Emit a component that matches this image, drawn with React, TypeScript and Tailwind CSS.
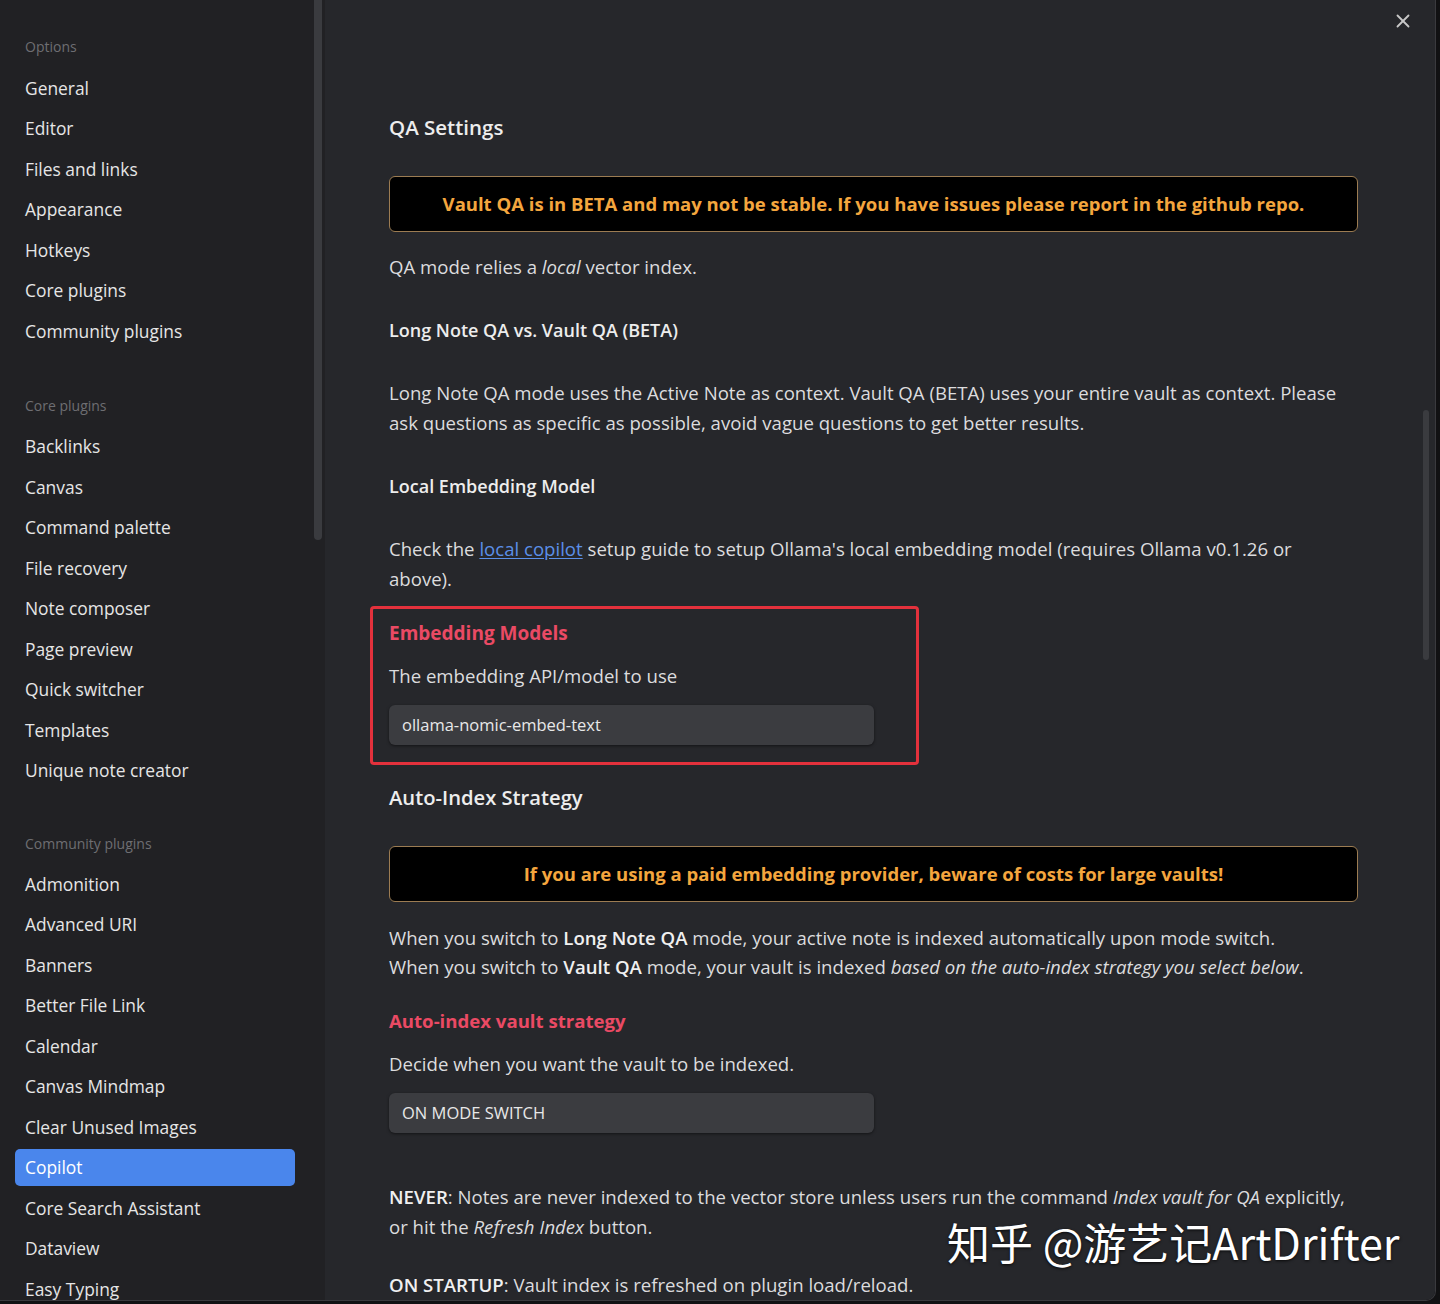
import { X } from "lucide-react";

const FONT = { fontFamily: '"Open Sans", "Noto Sans", sans-serif' };

const SECTIONS: { title: string; items: string[] }[] = [
  {
    title: "Options",
    items: [
      "General",
      "Editor",
      "Files and links",
      "Appearance",
      "Hotkeys",
      "Core plugins",
      "Community plugins",
    ],
  },
  {
    title: "Core plugins",
    items: [
      "Backlinks",
      "Canvas",
      "Command palette",
      "File recovery",
      "Note composer",
      "Page preview",
      "Quick switcher",
      "Templates",
      "Unique note creator",
    ],
  },
  {
    title: "Community plugins",
    items: [
      "Admonition",
      "Advanced URI",
      "Banners",
      "Better File Link",
      "Calendar",
      "Canvas Mindmap",
      "Clear Unused Images",
      "Copilot",
      "Core Search Assistant",
      "Dataview",
      "Easy Typing",
    ],
  },
];

function Sidebar() {
  return (
    <aside className="relative h-full w-[325px] shrink-0 overflow-hidden bg-[#212124]">
      <div className="px-[15px] pt-[37px]">
        {SECTIONS.map((s, i) => (
          <div key={s.title} className={i === 1 ? "mt-[46px]" : i === 2 ? "mt-[45px]" : ""}>
            <div className="px-[10px] text-[14px] leading-[20px] text-[#6e6e72]">{s.title}</div>
            <div className={`${i === 2 ? "mt-[11.5px]" : "mt-[12.5px]"} flex flex-col gap-[3.5px]`}>
              {s.items.map((it) => (
                <div
                  key={it}
                  className={`flex h-[37px] w-[280px] items-center rounded-[5px] px-[10px] text-[17.4px] ${
                    it === "Copilot" ? "bg-[#4a86ec] text-white" : "text-[#e6e6e6]"
                  }`}
                >
                  {it}
                </div>
              ))}
            </div>
          </div>
        ))}
      </div>
      {/* scrollbar */}
      <div className="absolute right-[3px] top-0 h-[540px] w-[8px] rounded-b-[4px] bg-[#3a3b3f]" />
    </aside>
  );
}

function Warning({ children }: { children: React.ReactNode }) {
  return (
    <div className="mt-[34px] flex h-[56px] w-[969px] items-center justify-center rounded-[6px] border border-[#9c7c52] bg-black text-[18.5px] font-bold text-[#f4a63e]">
      {children}
    </div>
  );
}

function SelectBox({ children, className = "" }: { children: React.ReactNode; className?: string }) {
  return (
    <div
      className={`flex h-[40px] w-[485px] items-center rounded-[6px] bg-[#3b3c40] px-[13px] text-[16.5px] text-[#e8e8e8] shadow-[0_1px_3px_rgba(0,0,0,0.5)] ${className}`}
    >
      {children}
    </div>
  );
}

function Main() {
  return (
    <main className="relative h-full flex-1 overflow-hidden bg-[#26272b] text-[18.6px] leading-[30px] text-[#dcdcde]">
      <button className="absolute right-[21px] top-[10px] text-[#c8c8c8]">
        <X size={22} strokeWidth={2} />
      </button>
      {/* scrollbar */}
      <div className="absolute right-[6px] top-[410px] h-[250px] w-[6px] rounded-full bg-[#3a3b3f]" />

      <div className="pl-[64px] pt-[112px]">
        <h2 className="text-[20.5px] font-semibold text-[#ededed]">QA Settings</h2>

        <Warning>Vault QA is in BETA and may not be stable. If you have issues please report in the github repo.</Warning>

        <p className="mt-[20px]">
          QA mode relies a <em>local</em> vector index.
        </p>

        <h3 className="mt-[33px] text-[18px] font-semibold text-[#ededed]">Long Note QA vs. Vault QA (BETA)</h3>

        <p className="mt-[33px] w-[969px]">
          Long Note QA mode uses the Active Note as context. Vault QA (BETA) uses your entire vault as context. Please
          ask questions as specific as possible, avoid vague questions to get better results.
        </p>

        <h3 className="mt-[33px] text-[18px] font-semibold text-[#ededed]">Local Embedding Model</h3>

        <p className="mt-[33px] w-[969px]">
          Check the <span className="text-[#5b8fe8] underline underline-offset-2">local copilot</span> setup guide to
          setup Ollama's local embedding model (requires Ollama v0.1.26 or above).
        </p>

        <div className="-ml-[19px] mt-[12px] w-[549px] rounded-[4px] border-[3px] border-[#e3313c] pb-[17px] pl-[16px] pt-[9px]">
          <div className="text-[19px] font-bold text-[#ea4a64]">Embedding Models</div>
          <div className="mt-[13px]">The embedding API/model to use</div>
          <SelectBox className="mt-[14px]">ollama-nomic-embed-text</SelectBox>
        </div>

        <h2 className="mt-[17px] text-[20.2px] font-semibold text-[#ededed]">Auto-Index Strategy</h2>

        <Warning>If you are using a paid embedding provider, beware of costs for large vaults!</Warning>

        <p className="mt-[21px] leading-[29px]">
          When you switch to <b className="font-semibold text-[#f0f0f0]">Long Note QA</b> mode, your active note is
          indexed automatically upon mode switch.
          <br />
          When you switch to <b className="font-semibold text-[#f0f0f0]">Vault QA</b> mode, your vault is indexed{" "}
          <em>based on the auto-index strategy you select below</em>.
        </p>

        <div className="mt-[25px] font-bold text-[#ea4a64]">Auto-index vault strategy</div>
        <div className="mt-[13px]">Decide when you want the vault to be indexed.</div>
        <SelectBox className="mt-[14px]">ON MODE SWITCH</SelectBox>

        <p className="mt-[49px] w-[975px]">
          <b className="font-semibold text-[#f0f0f0]">NEVER</b>: Notes are never indexed to the vector store unless
          users run the command <em>Index vault for QA</em> explicitly, or hit the <em>Refresh Index</em> button.
        </p>

        <p className="mt-[28px]">
          <b className="font-semibold text-[#f0f0f0]">ON STARTUP</b>: Vault index is refreshed on plugin load/reload.
        </p>
      </div>

      {/* watermark */}
      <div
        className="absolute left-[622px] top-[1211px] text-[43px] leading-[60px] text-white [text-shadow:0_1px_3px_rgba(0,0,0,0.8)]"
        style={{ fontFamily: '"Noto Sans CJK SC", "Noto Sans", sans-serif' }}
      >
        知乎 @游艺记ArtDrifter
      </div>
    </main>
  );
}

export default function App() {
  return (
    <div className="h-[1304px] w-[1440px] overflow-hidden bg-[#111113]" style={FONT}>
      <div className="flex h-[1301px] w-[1436px] overflow-hidden rounded-br-[10px] border-b border-r border-[#3a3a3e]">
        <Sidebar />
        <Main />
      </div>
    </div>
  );
}
